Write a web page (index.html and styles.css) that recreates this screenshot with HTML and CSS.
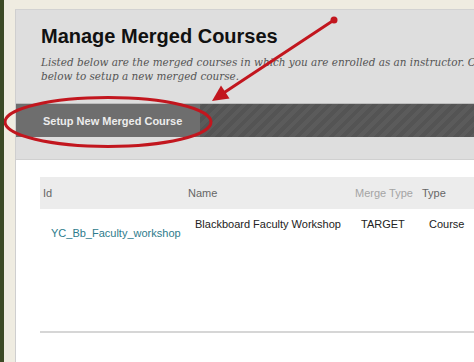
FILE: index.html
```html
<!DOCTYPE html>
<html lang="en">

<head>
    <meta charset="UTF-8">
    <title>Manage Merged Courses</title>
    <link rel="stylesheet" href="styles.css">
</head>

<body>
    <div class="page">
        <div class="panel">
            <div class="head">
                <h1>Manage Merged Courses</h1>
                <p class="desc">Listed below are the merged courses in which you are enrolled as an instructor. Click the button<br>below to setup a new merged course.</p>
            </div>
            <div class="actionbar">
                <a class="btn" href="#">Setup New Merged Course</a>
            </div>
            <div class="strip"></div>
            <div class="content">
                <div class="grid head-row">
                    <span>Id</span>
                    <span>Name</span>
                    <span class="muted">Merge Type</span>
                    <span>Type</span>
                </div>
                <div class="grid body-row">
                    <a class="cid" href="#">YC_Bb_Faculty_workshop</a>
                    <span>Blackboard Faculty Workshop</span>
                    <span>TARGET</span>
                    <span>Course</span>
                </div>
                <div class="rule"></div>
            </div>
        </div>
    </div>

    <!-- red annotation drawn over the screenshot -->
    <svg class="marks" width="474" height="362" viewBox="0 0 474 362">
        <ellipse cx="108" cy="122" rx="103" ry="24.5" fill="none" stroke="#c2161e" stroke-width="3"/>
        <line x1="334" y1="20" x2="222" y2="94" stroke="#c2161e" stroke-width="3" stroke-linecap="round"/>
        <polygon points="212,101 229.5,98.5 221,85.5" fill="#c2161e"/>
        <circle cx="334" cy="20" r="3.5" fill="#c2161e"/>
    </svg>
</body>

</html>
```

FILE: styles.css
```css
* {
    margin: 0;
    padding: 0
}
body{
    background-color: #efece1;
    border-left: 4px solid #3c4a25;
    overflow: hidden;
    height: 362px;
    position: relative;
    font-family: "Liberation Sans", Arial, sans-serif;
}
.page {
    padding: 9px 0 0 11px;
    height: 353px;
}
.panel {
    width: 560px;
    height: 100%;
    background: #fff;
    border-left: 1px solid #cfcfcf;
    border-top: 1px solid #d2d2d2;
}
.head {
    background: #dedede;
    padding: 13px 0 0 25px;
    height: 93px;
    box-sizing: border-box;
    white-space: nowrap;
}
.head h1 {
    font-size: 20px;
    font-weight: bold;
    color: #111;
    line-height: 26px;
}
.desc {
    margin-top: 6px;
    font-family: "DejaVu Serif", serif;
    font-stretch: condensed;
    font-style: italic;
    font-size: 11.6px;
    line-height: 14px;
    color: #555;
}
.actionbar {
    height: 34px;
    background: repeating-linear-gradient(135deg, #5b5b5b 0 4px, #545454 4px 8px);
    border-top: 1px solid #bdbdbd;
    box-sizing: border-box;
    display: flex;
}
.btn {
    width: 184px;
    background: #6e6e6e;
    color: #ececec;
    font-size: 11px;
    font-weight: bold;
    text-decoration: none;
    display: flex;
    align-items: center;
    padding-left: 27px;
    box-sizing: border-box;
}
.strip {
    height: 22px;
    background: #dedede;
    border-bottom: 1px solid #d0d0d0;
}
.content {
    padding: 17px 0 0 24px;
}
.grid {
    display: grid;
    grid-template-columns: 145px 166px 68px 1fr;
    font-size: 11px;
}
.head-row {
    background: #ececec;
    height: 32px;
    align-items: center;
    color: #666;
}
.head-row span {
    padding-left: 3px;
}
.head-row .muted {
    color: #a4a4a4;
    padding-left: 4px;
}
.body-row {
    color: #222;
    padding-top: 5px;
    height: 117px;
}
.body-row span {
    padding-top: 4px;
    padding-left: 10px;
}
.body-row .cid {
    color: #2d7b8c;
    text-decoration: none;
    font-size: 11px;
    padding: 13px 0 0 11px;
}
.rule {
    height: 2px;
    background: #d6d6d6;
}
.marks {
    position: absolute;
    left: -4px;
    top: 0;
    pointer-events: none;
}
```
